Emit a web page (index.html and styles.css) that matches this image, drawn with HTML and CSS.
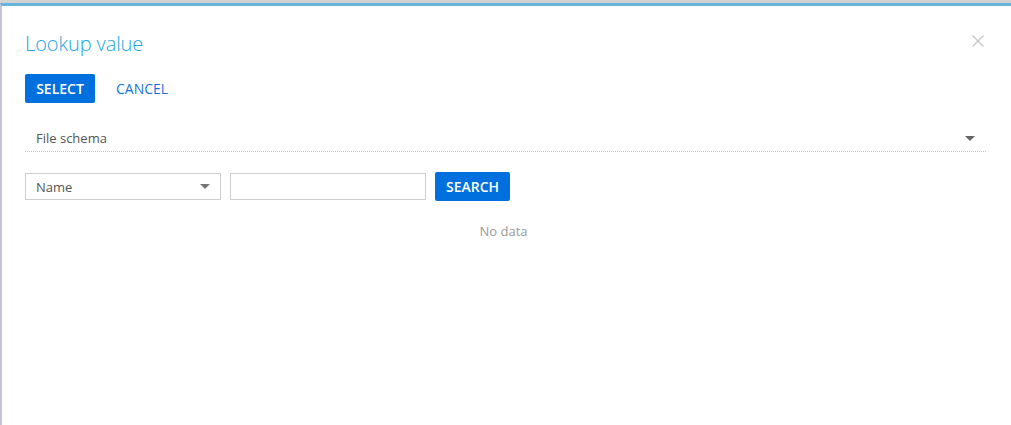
FILE: index.html
```html
<!DOCTYPE html>
<html>
<head>
<meta charset="utf-8">
<link rel="stylesheet" href="styles.css">
</head>
<body>
<div class="topgray"></div>
<div class="dialog">
  <div class="header">
    <div class="title">Lookup value</div>
    <div class="close">
      <svg width="12" height="12" viewBox="0 0 12 12"><path d="M0.5 0.5L11.5 11.5M11.5 0.5L0.5 11.5" stroke="#c4c4c4" stroke-width="1.2" fill="none"/></svg>
    </div>
  </div>
  <div class="actions">
    <button class="btn primary">SELECT</button>
    <button class="btn link">CANCEL</button>
  </div>
  <div class="schema">
    <span class="schema-text">File schema</span>
    <span class="tri"></span>
  </div>
  <div class="filter">
    <div class="combo"><span>Name</span><span class="tri small"></span></div>
    <div class="input"></div>
    <button class="btn primary search">SEARCH</button>
  </div>
  <div class="nodata">No data</div>
</div>
</body>
</html>
```
FILE: styles.css
```css
html, body { margin: 0; padding: 0; background: #fff; }
body { font-family: "Open Sans", "Liberation Sans", sans-serif; width: 1011px; height: 425px; overflow: hidden; }
.topgray { height: 3px; background: #d2d2d2; }
.dialog { height: 422px; border-top: 3px solid #64b4dc; border-left: 2px solid #c2c5d8; box-sizing: border-box; padding: 0 25px 0 23px; }
.header { display: flex; justify-content: space-between; align-items: center; height: 68px; box-sizing: border-box; }
.title { font-size: 20px; font-weight: 300; color: #26a6e6; margin-top: 6px; letter-spacing: -0.1px; }
.close { width: 12px; height: 12px; margin-right: 2px; margin-top: 1px; }
.close svg { display: block; }
.actions { display: flex; align-items: center; }
.btn { font-family: inherit; font-size: 14px; border: none; border-radius: 2px; cursor: pointer; padding: 0; }
.primary { background: #0070df; color: #fff; height: 29px; width: 70px; font-weight: 600; }
.link { background: none; color: #1a73d9; margin-left: 21px; height: 29px; font-weight: 400; }
.schema { margin-top: 22px; height: 27px; border-bottom: 1px dotted #c4c4c4; display: flex; align-items: center; justify-content: space-between; padding-left: 11px; padding-right: 11px; box-sizing: border-box; }
.schema-text { font-size: 13px; color: #555; }
.tri { width: 0; height: 0; border-left: 5px solid transparent; border-right: 5px solid transparent; border-top: 5px solid #666; }
.tri.small { border-top-color: #777; }
.filter { display: flex; align-items: center; margin-top: 20px; }
.combo { width: 196px; height: 27px; border: 1px solid #cfcfcf; box-sizing: border-box; display: flex; align-items: center; justify-content: space-between; padding: 0 10px; font-size: 13px; color: #555; }
.input { width: 196px; height: 27px; border: 1px solid #cfcfcf; box-sizing: border-box; margin-left: 9px; }
.search { margin-left: 9px; width: 75px; height: 29px; }
.nodata { text-align: center; font-size: 13px; color: #999; margin-top: 21px; padding-right: 4px; }
```
